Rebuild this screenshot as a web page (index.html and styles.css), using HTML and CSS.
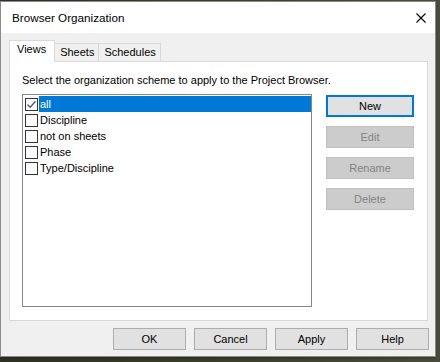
FILE: index.html
```html
<!DOCTYPE html>
<html>
<head>
<meta charset="utf-8">
<link rel="stylesheet" href="styles.css">
</head>
<body>
<div class="dialog">
  <div class="titlebar">
    <span class="title">Browser Organization</span>
    <svg class="close" width="10" height="10" viewBox="0 0 10 10"><path d="M0.5 0.5 L9.5 9.5 M9.5 0.5 L0.5 9.5" stroke="#000" stroke-width="1.1" fill="none"/></svg>
  </div>
  <div class="content">
    <div class="tabs">
      <div class="tab active">Views</div>
      <div class="tab">Sheets</div>
      <div class="tab">Schedules</div>
    </div>
    <div class="panel">
      <div class="prompt">Select the organization scheme to apply to the Project Browser.</div>
      <div class="main">
        <div class="list">
          <div class="row selected"><span class="cb checked"><svg width="11" height="11" viewBox="0 0 11 11"><path d="M1.5 5.5 L4.2 8.2 L9.5 2.2" stroke="#555" stroke-width="1.3" fill="none"/></svg></span><span class="label">all</span></div>
          <div class="row"><span class="cb"></span><span class="label">Discipline</span></div>
          <div class="row"><span class="cb"></span><span class="label">not on sheets</span></div>
          <div class="row"><span class="cb"></span><span class="label">Phase</span></div>
          <div class="row"><span class="cb"></span><span class="label">Type/Discipline</span></div>
        </div>
        <div class="side">
          <div class="btn default">New</div>
          <div class="btn disabled">Edit</div>
          <div class="btn disabled">Rename</div>
          <div class="btn disabled">Delete</div>
        </div>
      </div>
    </div>
    <div class="footer">
      <div class="btn foot">OK</div>
      <div class="btn foot">Cancel</div>
      <div class="btn foot">Apply</div>
      <div class="btn foot">Help</div>
    </div>
  </div>
</div>
</body>
</html>
```
FILE: styles.css
```css
html, body {
  margin: 0;
  padding: 0;
}
body {
  width: 440px;
  height: 362px;
  overflow: hidden;
  background: linear-gradient(90deg, #2e3224 0%, #3b3f2c 50%, #4a4d3a 100%);
  font-family: "Liberation Sans", Arial, sans-serif;
  font-size: 11px;
  color: #000;
}
.dialog {
  margin: 2px 0 0 1px;
  width: 434px;
  height: 354px;
  background: #f0f0f0;
  box-shadow: 0 0 0 1px #8a8a8a, 0 2px 3px rgba(0,0,0,0.35);
  display: flex;
  flex-direction: column;
}
.titlebar {
  height: 31px;
  background: #fff;
  display: flex;
  align-items: center;
  justify-content: space-between;
  padding: 0 9px 0 11px;
  flex: none;
}
.title {
  font-size: 11.7px;
  color: #000;
  margin-top: -1px;
}
.close {
  display: block;
  margin-top: 1px;
}
.content {
  flex: 1;
  padding: 7px 6px 0 8px;
  display: flex;
  flex-direction: column;
}
.tabs {
  display: flex;
  align-items: flex-end;
  height: 21px;
  margin-right: 1px;
  position: relative;
  z-index: 1;
}
.tab {
  height: 18px;
  box-sizing: border-box;
  border: 1px solid #d9d9d9;
  border-bottom: none;
  background: #f0f0f0;
  padding: 0 4px 0 5px;
  line-height: 17px;
  margin-left: -1px;
}
.tab:first-child { margin-left: 0; }
.tab.active {
  background: #fff;
  padding: 0 8px 0 7px;
  line-height: 17px;
  margin-bottom: -1px;
  height: 22px;
  z-index: 2;
  position: relative;
}
.panel {
  height: 260px;
  box-sizing: border-box;
  border: 1px solid #d9d9d9;
  background: #fff;
  margin-right: 1px;
  padding: 10px 0 0 12px;
}
.prompt {
  height: 16px;
  line-height: 16px;
}
.main {
  display: flex;
  margin-top: 6px;
}
.list {
  width: 290px;
  height: 213px;
  box-sizing: border-box;
  border: 1px solid #828790;
  background: #fff;
  padding: 1px 0 0 2px;
}
.row {
  display: flex;
  align-items: center;
  height: 16px;
}
.cb {
  width: 13px;
  height: 13px;
  box-sizing: border-box;
  border: 1px solid #333;
  background: #fff;
  flex: none;
  display: flex;
  align-items: center;
  justify-content: center;
}
.cb svg { display: block; }
.label {
  flex: 1;
  height: 16px;
  line-height: 16px;
  padding-left: 1px;
  margin-left: 1px;
}
.row.selected .label {
  background: #0078d7;
  color: #fff;
}
.side {
  margin-left: 14px;
  margin-top: 1px;
  display: flex;
  flex-direction: column;
  gap: 9px;
}
.btn {
  box-sizing: border-box;
  width: 88px;
  height: 22px;
  border: 1px solid #adadad;
  background: #e1e1e1;
  display: flex;
  align-items: center;
  justify-content: center;
}
.btn.default {
  border: 2px solid #0078d7;
}
.btn.disabled {
  background: #cccccc;
  border-color: #bfbfbf;
  color: #838383;
}
.footer {
  display: flex;
  justify-content: flex-end;
  gap: 8px;
  margin-top: 7px;
}
.btn.foot {
  width: 73px;
  height: 22px;
}
```
